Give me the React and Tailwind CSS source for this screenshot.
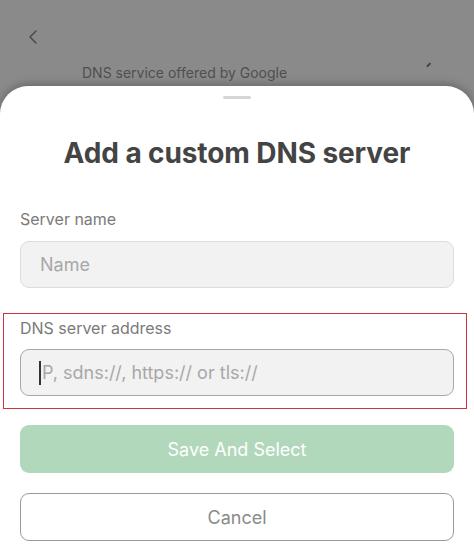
import { ChevronLeft } from 'lucide-react';

const App = () => {
    return (
        <div className="w-[474px] h-[560px] overflow-hidden bg-[#8a8a8a] font-['Inter','Liberation_Sans',sans-serif]">
            {/* Dimmed page behind the sheet */}
            <div className="h-[86px] relative">
                <ChevronLeft className="absolute left-[21px] top-[25px] w-[24px] h-[24px] text-[#4a4a4a]" strokeWidth={1.5} />
                <div className="absolute left-[82px] top-[64px] text-[14px] leading-[18px] text-[#4f4f4f]">DNS service offered by Google</div>
                <div className="absolute left-[426px] top-[64px] w-[5px] h-[1.5px] bg-[#444] -rotate-45" />
            </div>

            {/* Bottom sheet */}
            <div className="bg-white rounded-t-[28px] shadow-[0_-2px_8px_rgba(0,0,0,0.25)] h-[474px] pt-[10px] px-[20px]">
                <div className="mx-auto w-[28px] h-[3px] rounded-full bg-[#d6d6d6]" />

                <h1 className="mt-[37px] text-center text-[28px] leading-[34px] font-bold text-[#444] tracking-[-0.1px]">Add a custom DNS server</h1>

                <div className="mt-[39px] text-[16px] leading-[20px] text-[#7a7a7a]">Server name</div>
                <div className="mt-[12px] h-[47px] rounded-[9px] border border-[#dcdcdc] bg-[#f2f2f2] flex items-center px-[19px] text-[18px] text-[#a8a8a8]">
                    Name
                </div>

                {/* Highlighted field */}
                <div className="mt-[25px] -ml-[17px] -mr-[13px] border border-[#d0313a] pl-[16px] pr-[12px] pt-[4px] pb-[12px]">
                    <div className="text-[16px] leading-[20px] text-[#7a7a7a]">DNS server address</div>
                    <div className="mt-[11px] h-[47px] rounded-[9px] border border-[#a8a8a8] bg-[#f2f2f2] flex items-center pl-[18px] text-[18px] text-[#a8a8a8]">
                        <span className="w-[2px] h-[24px] bg-[#333] mr-[1px]" />
                        P, sdns://, https:// or tls://
                    </div>
                </div>

                <button className="mt-[16px] w-full h-[48px] rounded-[9px] bg-[#b2d8bc] text-white text-[18px]">
                    Save And Select
                </button>
                <button className="mt-[20px] w-full h-[48px] rounded-[9px] border border-[#9a9a9a] bg-white text-[#8a8a8a] text-[18px]">
                    Cancel
                </button>
            </div>
        </div>
    );
};

export default App;
